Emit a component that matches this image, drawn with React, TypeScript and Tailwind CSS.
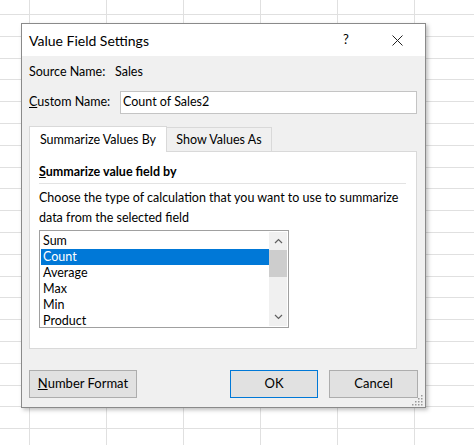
import React from "react";

const FONT = { fontFamily: '"Segoe UI", "Lato", "Noto Sans", sans-serif' };

const ITEMS = ["Sum", "Count", "Average", "Max", "Min", "Product"];

function SheetGrid() {
  const cols = [29, 106, 183, 260, 337, 414];
  const rows = Array.from({ length: 21 }, (_, i) => 14 + i * 21.8);
  return (
    <svg className="absolute inset-0" width={474} height={445}>
      {cols.map((x) => (
        <line key={`c${x}`} x1={x + 0.5} y1={0} x2={x + 0.5} y2={445} stroke="#e0e0e0" />
      ))}
      {rows.map((y) => (
        <line key={`r${y}`} x1={0} y1={Math.round(y) + 0.5} x2={474} y2={Math.round(y) + 0.5} stroke="#e0e0e0" />
      ))}
    </svg>
  );
}

function Chevron({ up }: { up?: boolean }) {
  return (
    <svg width="9" height="6" viewBox="0 0 9 6">
      <path
        d={up ? "M1 5 L4.5 1.5 L8 5" : "M1 1 L4.5 4.5 L8 1"}
        fill="none"
        stroke="#606060"
        strokeWidth="1.2"
      />
    </svg>
  );
}

function Button({ children, focused, className }: { children: React.ReactNode; focused?: boolean; className?: string }) {
  return (
    <div
      className={`h-[28px] flex items-center justify-center bg-[#e1e1e1] text-[13px] text-black border ${
        focused ? "border-[#0078d7]" : "border-[#adadad]"
      } ${className ?? ""}`}
    >
      {children}
    </div>
  );
}

export default function App() {
  return (
    <div className="relative w-[474px] h-[445px] overflow-hidden bg-white whitespace-nowrap" style={FONT}>
      <SheetGrid />

      <div className="absolute left-[21px] top-[23px] w-[405px] h-[385px] flex flex-col border border-[#8a8a8a] shadow-[2px_2px_4px_rgba(0,0,0,0.25)] bg-[#f0f0f0]">
        {/* title bar */}
        <div className="h-[32px] bg-white flex items-center pl-[7px] shrink-0">
          <span className="text-[14px] text-black flex-1">Value Field Settings</span>
          <span className="text-[13px] text-black w-[14px] text-center mr-[39px]">?</span>
          <svg width="11" height="11" viewBox="0 0 11 11" className="mr-[22px]">
            <path d="M0.5 0.5 L10.5 10.5 M10.5 0.5 L0.5 10.5" stroke="#222" strokeWidth="1" />
          </svg>
        </div>

        <div className="flex-1 flex flex-col px-[7px] text-[12.5px] text-black">
          {/* source name */}
          <div className="h-[22px] mt-[5px] flex items-center">
            <span className="w-[86px]">Source Name:</span>
            <span>Sales</span>
          </div>

          {/* custom name */}
          <div className="h-[23px] mt-[8px] flex items-center">
            <span className="w-[91px]">
              <span className="underline">C</span>ustom Name:
            </span>
            <div className="flex-1 h-[23px] bg-white border border-[#c4c4c4] flex items-center pl-[2px] mr-[1px]">
              Count of Sales2
            </div>
          </div>

          {/* tabs */}
          <div className="mt-[12px] flex items-end h-[25px] relative z-10">
            <div className="w-[138px] h-[26px] -mb-px bg-white border border-b-0 border-[#d9d9d9] flex items-center justify-center pt-[1px]">
              Summarize Values By
            </div>
            <div className="w-[105px] h-[24px] border border-l-0 border-b-0 border-[#d9d9d9] flex items-center justify-center pt-[1px]">
              Show Values As
            </div>
          </div>

          {/* panel */}
          <div className="w-[388px] h-[198px] bg-white border border-[#d9d9d9] px-[9px] pt-[10px]">
            <div className="font-bold leading-[20px]">
              <span className="underline">S</span>ummarize value field by
            </div>
            <div className="h-px bg-[#e3e3e3] mt-[1px] mr-[1px]" />
            <div className="leading-[20px] mt-[4px]">
              Choose the type of calculation that you want to use to summarize
              <br />
              data from the selected field
            </div>

            {/* listbox */}
            <div className="mt-[2px] w-[250px] h-[98px] border border-[#a0a0a0] flex p-[1px] overflow-hidden">
              <div className="flex-1 flex flex-col pt-[1px] overflow-hidden">
                {ITEMS.map((it) => (
                  <div
                    key={it}
                    className={`h-[16px] leading-[16px] pl-[2px] shrink-0 ${
                      it === "Count" ? "bg-[#0078d7] text-white" : ""
                    }`}
                  >
                    {it}
                  </div>
                ))}
              </div>
              <div className="w-[18px] bg-[#f0f0f0] flex flex-col">
                <div className="h-[18px] flex items-center justify-center">
                  <Chevron up />
                </div>
                <div className="h-[27px] bg-[#cdcdcd]" />
                <div className="flex-1" />
                <div className="h-[18px] flex items-center justify-center">
                  <Chevron />
                </div>
              </div>
            </div>
          </div>

          {/* buttons */}
          <div className="mt-[21px] flex items-center">
            <Button className="w-[108px]">
              <span>
                <span className="underline">N</span>umber Format
              </span>
            </Button>
            <div className="flex-1" />
            <Button focused className="w-[88px]">OK</Button>
            <Button className="w-[89px] ml-[11px]">Cancel</Button>
          </div>
        </div>

        {/* resize grip */}
        <svg className="absolute right-[1px] bottom-[1px]" width="12" height="12" viewBox="0 0 12 12">
          {[
            [10, 2], [10, 5], [7, 5], [10, 8], [7, 8], [4, 8], [10, 11], [7, 11], [4, 11], [1, 11],
          ].map(([x, y], i) => (
            <rect key={i} x={x - 1} y={y - 1} width="1.5" height="1.5" fill="#9a9a9a" />
          ))}
        </svg>
      </div>
    </div>
  );
}
